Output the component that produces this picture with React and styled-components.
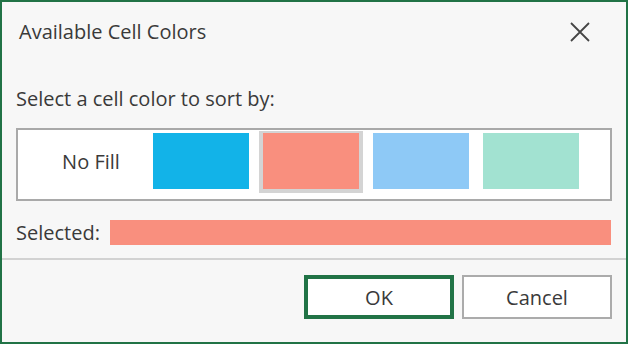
import React, {useState} from "react";
import styled, {createGlobalStyle} from "styled-components";

const GlobalStyle = createGlobalStyle`
  html, body {
    margin: 0;
    padding: 0;
    background: #f7f7f7;
  }
  * {
    box-sizing: border-box;
  }
`;

const Dialog = styled.div`
  width: 628px;
  height: 344px;
  border: 2px solid #217346;
  background: #f7f7f7;
  display: flex;
  flex-direction: column;
  font-family: "Open Sans", "Noto Sans", sans-serif;
  font-size: 20px;
  color: #3a3a3a;
`;

const Header = styled.div`
  height: 60px;
  display: flex;
  align-items: center;
  justify-content: space-between;
  padding: 0 36px 0 17px;
`;

const Title = styled.div`
  line-height: 24px;
`;

const CloseButton = styled.button`
  width: 20px;
  height: 20px;
  padding: 0;
  border: none;
  background: transparent;
  display: flex;
  cursor: pointer;
`;

const Body = styled.div`
  padding: 0 14px;
  display: flex;
  flex-direction: column;
`;

const Prompt = styled.div`
  margin-top: 25px;
  line-height: 24px;
`;

const Palette = styled.div`
  margin-top: 17px;
  height: 73px;
  border: 2px solid #a9a9a9;
  background: #ffffff;
  display: flex;
  gap: 6px;
  padding: 1px 0 6px 21px;
`;

const Cell = styled.div`
  width: 104px;
  height: 62px;
  padding: 2px 4px 4px;
  background: ${(p) => (p.$selected ? "#d4d4d4" : "transparent")};
  cursor: pointer;
`;

const Swatch = styled.div`
  width: 96px;
  height: 56px;
  background: ${(p) => p.$color};
  display: flex;
  align-items: center;
  justify-content: center;
`;

const SelectedRow = styled.div`
  margin-top: 19px;
  height: 25px;
  display: flex;
  align-items: center;
`;

const SelectedLabel = styled.div`
  width: 94px;
  line-height: 24px;
`;

const SelectedBar = styled.div`
  flex: 1;
  height: 25px;
  margin-right: 1px;
  background: ${(p) => p.$color};
`;

const Divider = styled.div`
  margin-top: 13px;
  height: 2px;
  background: #d2d2d2;
`;

const Footer = styled.div`
  display: flex;
  justify-content: flex-end;
  gap: 8px;
  padding: 15px 14px 0 0;
`;

const Button = styled.button`
  width: 150px;
  height: 44px;
  background: #ffffff;
  border: ${(p) => (p.$primary ? "4px solid #217346" : "2px solid #ababab")};
  font-family: "Open Sans", "Noto Sans", sans-serif;
  font-size: 20px;
  color: #3a3a3a;
  padding: 0;
  cursor: pointer;
`;

const colors = [
    {name: "No Fill", value: null},
    {name: "Blue", value: "#12b3e8"},
    {name: "Salmon", value: "#f98f7e"},
    {name: "Light Blue", value: "#8ec9f6"},
    {name: "Mint", value: "#a2e2d1"},
];

const App = () => {
    const [selected, setSelected] = useState(2);

    return (
        <>
            <GlobalStyle/>
            <Dialog>
                <Header>
                    <Title>Available Cell Colors</Title>
                    <CloseButton aria-label="Close">
                        <svg width="20" height="20" viewBox="0 0 20 20">
                            <path d="M1 1 L19 19 M19 1 L1 19" stroke="#454545" strokeWidth="1.8" fill="none"/>
                        </svg>
                    </CloseButton>
                </Header>
                <Body>
                    <Prompt>Select a cell color to sort by:</Prompt>
                    <Palette>
                        {colors.map((c, i) => (
                            <Cell key={c.name} $selected={i === selected} onClick={() => setSelected(i)}>
                                <Swatch $color={c.value || "transparent"}>
                                    {c.value ? null : c.name}
                                </Swatch>
                            </Cell>
                        ))}
                    </Palette>
                    <SelectedRow>
                        <SelectedLabel>Selected:</SelectedLabel>
                        <SelectedBar $color={colors[selected].value || "#ffffff"}/>
                    </SelectedRow>
                </Body>
                <Divider/>
                <Footer>
                    <Button $primary>OK</Button>
                    <Button>Cancel</Button>
                </Footer>
            </Dialog>
        </>
    );
};

export default App;
